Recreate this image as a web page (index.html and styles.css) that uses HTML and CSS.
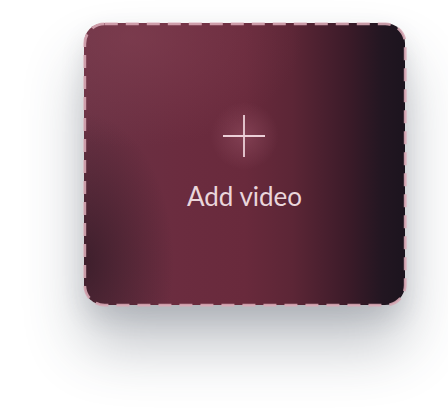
FILE: index.html
```html
<!DOCTYPE html>
<html>
<head>
<meta charset="utf-8">
<link rel="stylesheet" href="styles.css">
</head>
<body>
<div class="stage">
  <div class="card">
    <svg class="dash" width="324" height="285" viewBox="0 0 324 285">
      <rect x="1.8" y="1.8" width="320.4" height="281.4" rx="20" ry="20" fill="none" stroke="#d8a8b5" stroke-opacity="0.9" stroke-width="2.8" stroke-dasharray="13 8"/>
    </svg>
    <div class="content">
      <svg class="plus" width="44" height="44" viewBox="0 0 44 44">
        <path d="M22 1V43M1 22H43" stroke="#ecd0d8" stroke-width="1.8" fill="none"/>
      </svg>
      <div class="label">Add video</div>
    </div>
  </div>
</div>
</body>
</html>
```
FILE: styles.css
```css
html, body {
  margin: 0;
  padding: 0;
  background: #ffffff;
}
.stage {
  width: 448px;
  height: 410px;
  padding: 23px 0 0 84px;
  box-sizing: border-box;
}
.card {
  position: relative;
  width: 321px;
  height: 282px;
  border-radius: 20px;
  background:
    radial-gradient(ellipse 170px 110px at 15% 5%, rgba(135, 68, 86, 0.55), rgba(135, 68, 86, 0) 100%),
    radial-gradient(ellipse 90px 150px at 0% 85%, rgba(32, 18, 28, 0.6), rgba(32, 18, 28, 0) 100%),
    radial-gradient(circle 34px at 50% 40%, rgba(160, 90, 110, 0.45), rgba(160, 90, 110, 0) 100%),
    linear-gradient(90deg, #6a3244 0%, #6b2c3f 30%, #692a3c 50%, #5c2636 65%, #3c1b29 82%, #221621 93%, #1c141e 100%);
  box-shadow: 0 40px 60px rgba(55, 65, 80, 0.32), 0 12px 24px rgba(55, 65, 80, 0.14);
  display: flex;
  justify-content: center;
}
.dash {
  position: absolute;
  left: -1.5px;
  top: -1.5px;
}
.content {
  display: flex;
  flex-direction: column;
  align-items: center;
  padding-top: 91px;
}
.plus {
  display: block;
  margin-left: -1px;
}
.label {
  margin-top: 22px;
  font-family: Lato, "Noto Sans", sans-serif;
  font-size: 26px;
  color: #ead6db;
  line-height: 32px;
}
```
